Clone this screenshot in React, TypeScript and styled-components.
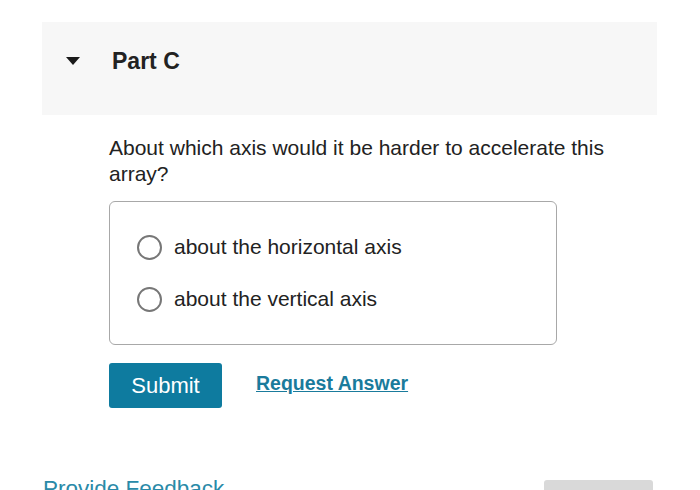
import React from "react";
import styled, { createGlobalStyle } from "styled-components";

const Global = createGlobalStyle`
  html, body { margin: 0; padding: 0; background: #fff; }
  body { font-family: "Liberation Sans", Arial, sans-serif; color: #222; overflow: hidden; }
`;

const Page = styled.div`
  width: 700px;
  height: 490px;
  padding: 22px 43px 0 42px;
  box-sizing: border-box;
  overflow: hidden;
`;

const Header = styled.div`
  height: 93px;
  background: #f7f7f7;
  display: flex;
  align-items: flex-start;
  padding: 26px 0 0 24px;
  box-sizing: border-box;
`;

const Caret = styled.span`
  width: 0;
  height: 0;
  border-left: 7px solid transparent;
  border-right: 7px solid transparent;
  border-top: 8px solid #1a1a1a;
  margin-right: 32px;
  margin-top: 9px;
`;

const Title = styled.h2`
  margin: 0;
  font-size: 23px;
  line-height: 26px;
  font-weight: 700;
  color: #222;
`;

const Body = styled.div`
  padding: 20px 0 0 67px;
`;

const Question = styled.p`
  margin: 0;
  font-size: 21px;
  line-height: 26px;
  width: 515px;
  color: #222;
`;

const Choices = styled.div`
  margin-top: 14px;
  width: 448px;
  height: 144px;
  box-sizing: border-box;
  border: 1.5px solid #a8a8a8;
  border-radius: 6px;
  display: flex;
  flex-direction: column;
  justify-content: center;
  gap: 16px;
  padding: 0 0 0 27px;
`;

const Choice = styled.label`
  display: flex;
  align-items: center;
  gap: 12px;
  font-size: 21px;
  color: #222;
  height: 36px;
`;

const Radio = styled.span`
  width: 21px;
  height: 21px;
  border: 2px solid #777;
  border-radius: 50%;
  background: #fff;
  flex: none;
`;

const Actions = styled.div`
  margin-top: 18px;
  display: flex;
  align-items: center;
  gap: 34px;
`;

const SubmitButton = styled.button`
  width: 113px;
  height: 45px;
  background: #0e7b9f;
  color: #fff;
  border: none;
  border-radius: 3px;
  font-family: "Liberation Sans", Arial, sans-serif;
  font-size: 22px;
  padding: 0;
`;

const LinkText = styled.a`
  font-size: 19.5px;
  font-weight: 700;
  color: #1a7b9c;
  text-decoration: underline;
  margin-top: -4px;
`;

const Footer = styled.div`
  margin-top: 68px;
  display: flex;
  justify-content: space-between;
  align-items: flex-start;
  margin-left: 1px;
`;

const FeedbackLink = styled.a`
  font-size: 22.5px;
  line-height: 26px;
  color: #2a8aa8;
`;

const GreyButton = styled.div`
  width: 109px;
  height: 30px;
  background: #d9d9d9;
  border-radius: 3px;
  margin-top: 4px;
  margin-right: 4px;
`;

export default function App() {
  return (
    <>
      <Global />
      <Page>
        <Header>
          <Caret />
          <Title>Part C</Title>
        </Header>
        <Body>
          <Question>About which axis would it be harder to accelerate this array?</Question>
          <Choices>
            <Choice>
              <Radio />
              about the horizontal axis
            </Choice>
            <Choice>
              <Radio />
              about the vertical axis
            </Choice>
          </Choices>
          <Actions>
            <SubmitButton>Submit</SubmitButton>
            <LinkText>Request Answer</LinkText>
          </Actions>
        </Body>
        <Footer>
          <FeedbackLink>Provide Feedback</FeedbackLink>
          <GreyButton />
        </Footer>
      </Page>
    </>
  );
}
